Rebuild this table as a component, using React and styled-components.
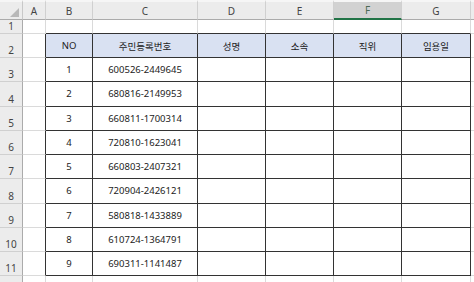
import React from "react";
import styled, { createGlobalStyle } from "styled-components";

const GlobalStyle = createGlobalStyle`
  * {
    box-sizing: border-box;
  }
  body {
    margin: 0;
    background: #ffffff;
    overflow: hidden;
    font-family: "Noto Sans", "Noto Sans CJK KR", sans-serif;
  }
`;

const Sheet = styled.div`
  display: grid;
  grid-template-columns: 23px 23px 47px 105px 68px 68px 68px 69px 1fr;
  grid-template-rows: 20px 14px 24px repeat(9, 24.25px) 24px;
  width: 474px;
  height: 282px;
  overflow: hidden;
  font-size: 9.5px;
  color: #222;
`;

const Corner = styled.div`
  position: relative;
  background: #ececec;
  border-right: 1px solid #c8c8c8;
  border-bottom: 1px solid #ababab;
  border-top: 2px solid #f6f6f6;
`;

const Triangle = styled.div`
  position: absolute;
  right: 3px;
  bottom: 2px;
  width: 0;
  height: 0;
  border-left: 9px solid transparent;
  border-bottom: 9px solid #b9b9b9;
`;

const ColHead = styled.div`
  display: flex;
  align-items: center;
  justify-content: center;
  background: ${(p) => (p.$selected ? "#d2d2d2" : "#ececec")};
  color: ${(p) => (p.$selected ? "#4b6a55" : "#444")};
  border-top: 2px solid #f6f6f6;
  border-right: ${(p) => (p.$last ? "none" : "1px solid #d0d0d0")};
  border-bottom: ${(p) =>
    p.$selected ? "2px solid #217346" : "1px solid #ababab"};
  font-size: 10px;
`;

const RowHead = styled.div`
  display: flex;
  align-items: flex-end;
  justify-content: center;
  padding-bottom: 2px;
  background: #ececec;
  color: #444;
  border-right: 1px solid #ababab;
  border-bottom: 1px solid #d0d0d0;
  font-size: 10px;
  line-height: 1;
`;

const Cell = styled.div`
  display: flex;
  align-items: center;
  justify-content: center;
  background: ${(p) => (p.$head ? "#d9e1f2" : "#ffffff")};
  border-right: ${(p) =>
    p.$last ? "none" : p.$darkRight ? "1px solid #333" : "1px solid #dadada"};
  border-bottom: ${(p) => (p.$darkBottom ? "1px solid #333" : "1px solid #dadada")};
  white-space: nowrap;
`;

const columns = ["A", "B", "C", "D", "E", "F", "G", ""];
const headers = ["NO", "주민등록번호", "성명", "소속", "직위", "임용일"];
const people = [
  "600526-2449645",
  "680816-2149953",
  "660811-1700314",
  "720810-1623041",
  "660803-2407321",
  "720904-2426121",
  "580818-1433889",
  "610724-1364791",
  "690311-1141487",
];

// one spreadsheet row: A, B..G (table or blank), trailing column
function SheetRow({ num, values, head, above, inTable }) {
  return (
    <>
      <RowHead>{num}</RowHead>
      <Cell $darkRight={inTable} />
      {[0, 1, 2, 3, 4, 5].map((i) => (
        <Cell
          key={i}
          $head={head}
          $darkRight={inTable}
          $darkBottom={inTable || above}
        >
          {values ? values[i] : null}
        </Cell>
      ))}
      <Cell $last />
    </>
  );
}

export default function App() {
  return (
    <>
      <GlobalStyle />
      <Sheet>
        <Corner>
          <Triangle />
        </Corner>
        {columns.map((c, i) => (
          <ColHead key={i} $selected={c === "F"} $last={c === ""}>
            {c}
          </ColHead>
        ))}
        <SheetRow num={1} above />
        <SheetRow num={2} values={headers} head inTable />
        {people.map((id, i) => (
          <SheetRow
            key={id}
            num={i + 3}
            values={[String(i + 1), id, "", "", "", ""]}
            inTable
          />
        ))}
        <SheetRow num={12} />
      </Sheet>
    </>
  );
}
